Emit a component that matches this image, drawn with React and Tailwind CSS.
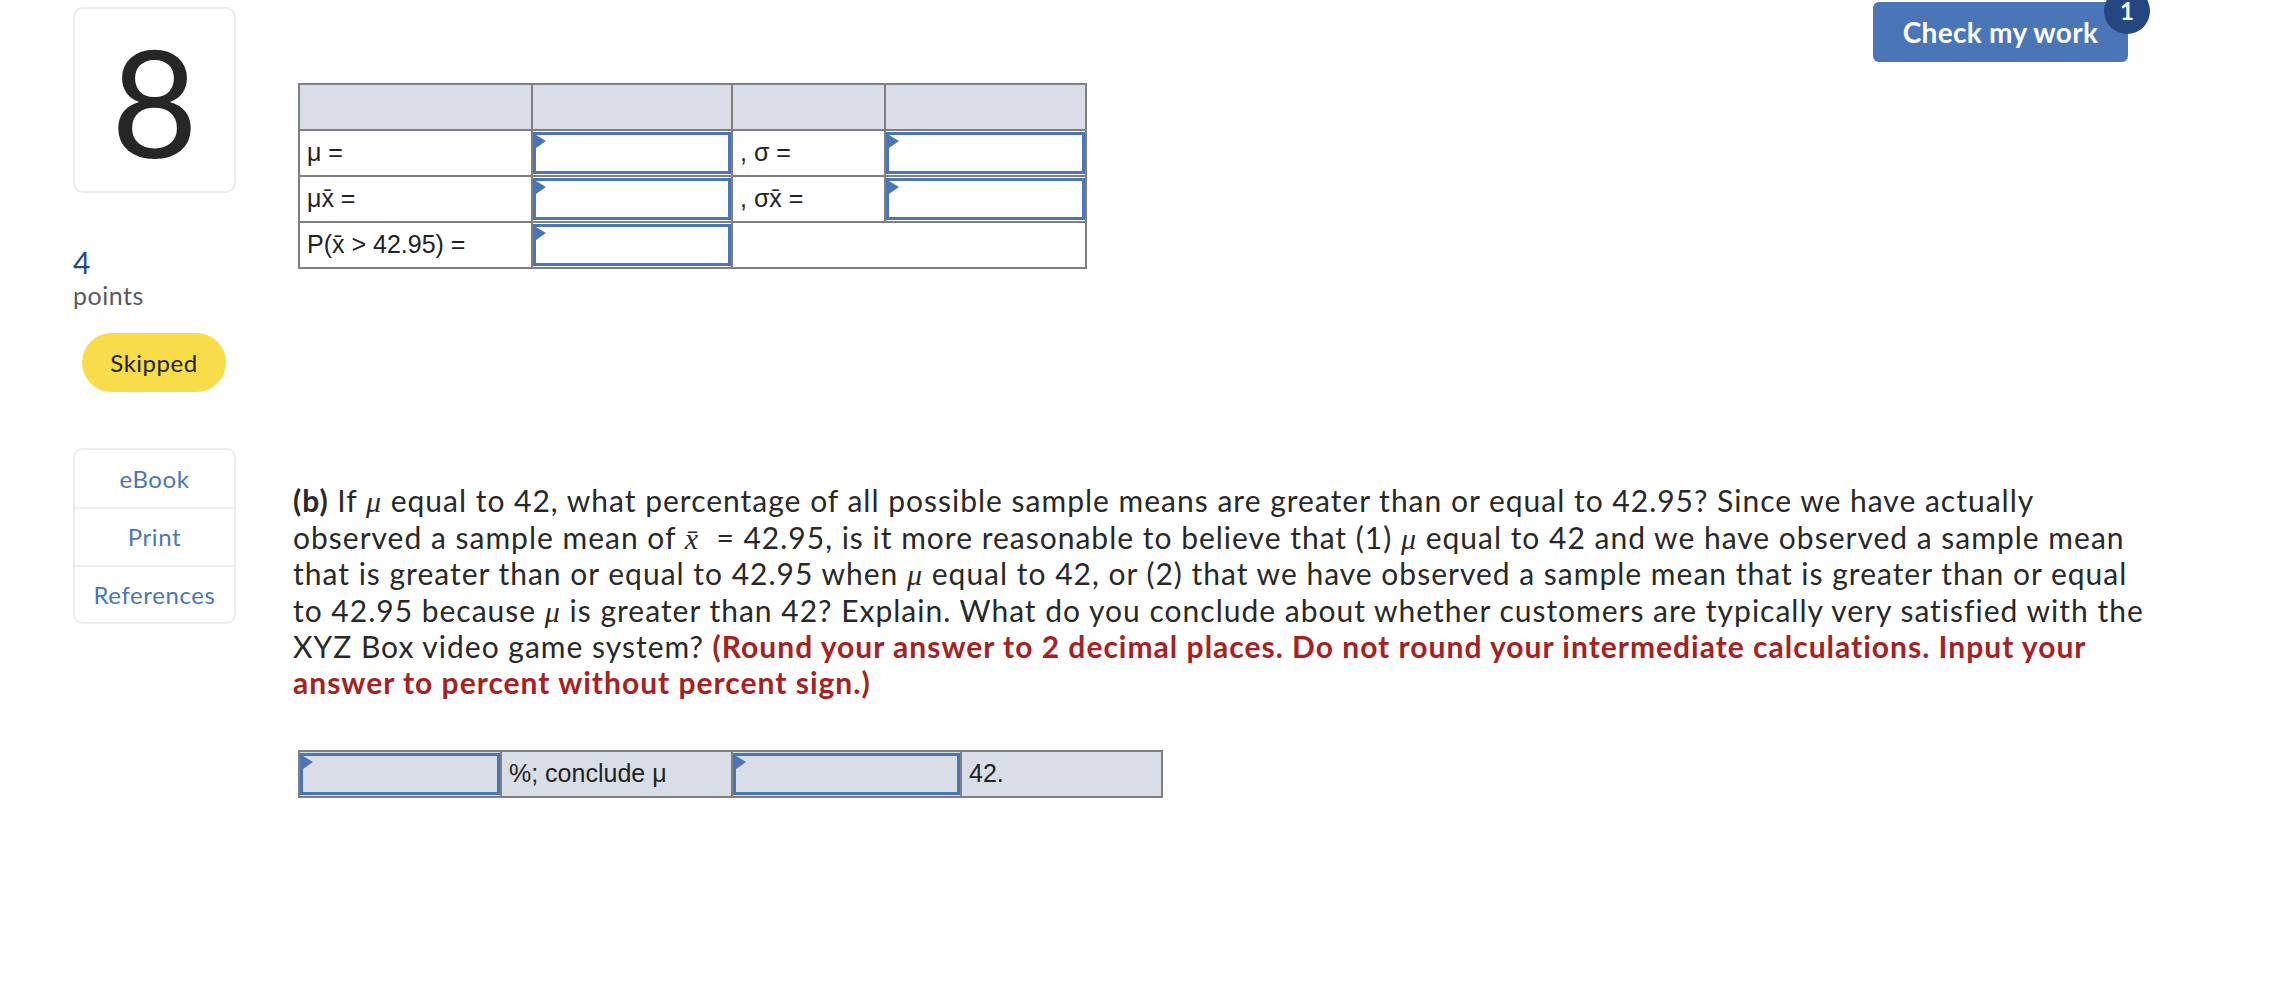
const blue = 'border-[#4a76b8]'

function Marker() {
  return (
    <svg className="absolute left-0 top-0" width="10" height="14" viewBox="0 0 10 14">
      <path d="M0 0 L10 6 L0 13 Z" fill="#4a76b8" />
    </svg>
  )
}

function InputCell({ shaded }) {
  return (
    <td className={`p-0 border-2 border-[#7f7f7f] ${shaded ? 'bg-[#d9dde6]' : 'bg-white'}`}>
      <div className={`relative h-[42px] border-[3px] ${blue}`}>
        <Marker />
      </div>
    </td>
  )
}

function TextCell({ children, shaded, colSpan }) {
  return (
    <td
      colSpan={colSpan}
      className={`h-[46px] px-[7px] py-0 border-2 border-[#7f7f7f] text-[25px] text-[#222] whitespace-nowrap ${
        shaded ? 'bg-[#d9dde6]' : 'bg-white'
      }`}
    >
      {children}
    </td>
  )
}

const xbar = 'x\u0304'
const mu = <i className="font-['Liberation_Serif',serif]">μ</i>

export default function App() {
  return (
    <div className="min-h-[998px] bg-white flex font-['Lato',sans-serif] text-[#282828]">
      {/* side column */}
      <aside className="ml-[73px] mt-[7px] w-[163px] shrink-0">
        <div className="h-[186px] rounded-[10px] border-2 border-[#ececec] flex items-center justify-center text-[150px] leading-none text-[#262626]">
          8
        </div>
        <div className="mt-[52px] text-[30px] leading-[35px] text-[#234a86]">4</div>
        <div className="text-[25px] leading-[30px] tracking-[0.5px] text-[#5a5a5a]">points</div>
        <div className="mt-[23px] ml-[9px] w-[144px] h-[59px] rounded-full bg-[#f9dc4a] flex items-center justify-center text-[24px] tracking-[0.5px] text-[#222]">
          Skipped
        </div>
        <div className="mt-[56px] rounded-[10px] border-2 border-[#ececec] text-[24px] tracking-[0.6px] text-[#4a76b8] text-center">
          <div className="h-[59px] flex items-center justify-center border-b-2 border-[#ececec]">eBook</div>
          <div className="h-[58px] flex items-center justify-center border-b-2 border-[#ececec]">Print</div>
          <div className="h-[55px] flex items-center justify-center">References</div>
        </div>
      </aside>

      {/* main column */}
      <main className="ml-[62px] mr-[156px] flex-1 min-w-0">
        <div className="flex justify-end pt-[2px]">
          <button className="relative w-[255px] h-[60px] rounded-[6px] bg-[#4a76b8] text-white text-[28px] tracking-[0.3px] font-bold">
            Check my work
            <span className="absolute -right-[22px] -top-[14px] w-[46px] h-[46px] rounded-full bg-[#254680] flex items-center justify-center text-[24px] leading-none font-bold">
              1
            </span>
          </button>
        </div>

        <table className="mt-[21px] border-collapse table-fixed w-[787px] font-['Liberation_Sans',Arial,sans-serif]">
          <colgroup>
            <col className="w-[233px]" />
            <col className="w-[200px]" />
            <col className="w-[153px]" />
            <col className="w-[201px]" />
          </colgroup>
          <tbody>
            <tr>
              <TextCell shaded />
              <TextCell shaded />
              <TextCell shaded />
              <TextCell shaded />
            </tr>
            <tr>
              <TextCell>μ =</TextCell>
              <InputCell />
              <TextCell>, σ =</TextCell>
              <InputCell />
            </tr>
            <tr>
              <TextCell>μ{xbar} =</TextCell>
              <InputCell />
              <TextCell>, σ{xbar} =</TextCell>
              <InputCell />
            </tr>
            <tr>
              <TextCell>P({xbar} &gt; 42.95) =</TextCell>
              <InputCell />
              <TextCell colSpan={2} />
            </tr>
          </tbody>
        </table>

        <p className="mt-[214px] -ml-[5px] text-[30px] leading-[35.6px] tracking-[1px] whitespace-nowrap">
          <b>(b)</b> If {mu} equal to 42, what percentage of all possible sample means are greater than or equal to 42.95? Since we have actually
          <br />
          observed a sample mean of <i className="font-['Liberation_Serif',serif]">{xbar}</i> &nbsp;= 42.95, is it more reasonable to believe that (1) {mu} equal to 42 and we have observed a sample mean
          <br />
          that is greater than or equal to 42.95 when {mu} equal to 42, or (2) that we have observed a sample mean that is greater than or equal
          <br />
          to 42.95 because {mu} is greater than 42? Explain. What do you conclude about whether customers are typically very satisfied with the
          <br />
          XYZ Box video game system?{' '}
          <b className="text-[#a52222]">
            (Round your answer to 2 decimal places. Do not round your intermediate calculations. Input your
            <br />
            answer to percent without percent sign.)
          </b>
        </p>

        <table className="mt-[49px] border-collapse table-fixed w-[863px] font-['Liberation_Sans',Arial,sans-serif]">
          <colgroup>
            <col className="w-[202px]" />
            <col className="w-[231px]" />
            <col className="w-[229px]" />
            <col className="w-[201px]" />
          </colgroup>
          <tbody>
            <tr>
              <InputCell shaded />
              <TextCell shaded>%; conclude μ</TextCell>
              <InputCell shaded />
              <TextCell shaded>42.</TextCell>
            </tr>
          </tbody>
        </table>
      </main>
    </div>
  )
}
